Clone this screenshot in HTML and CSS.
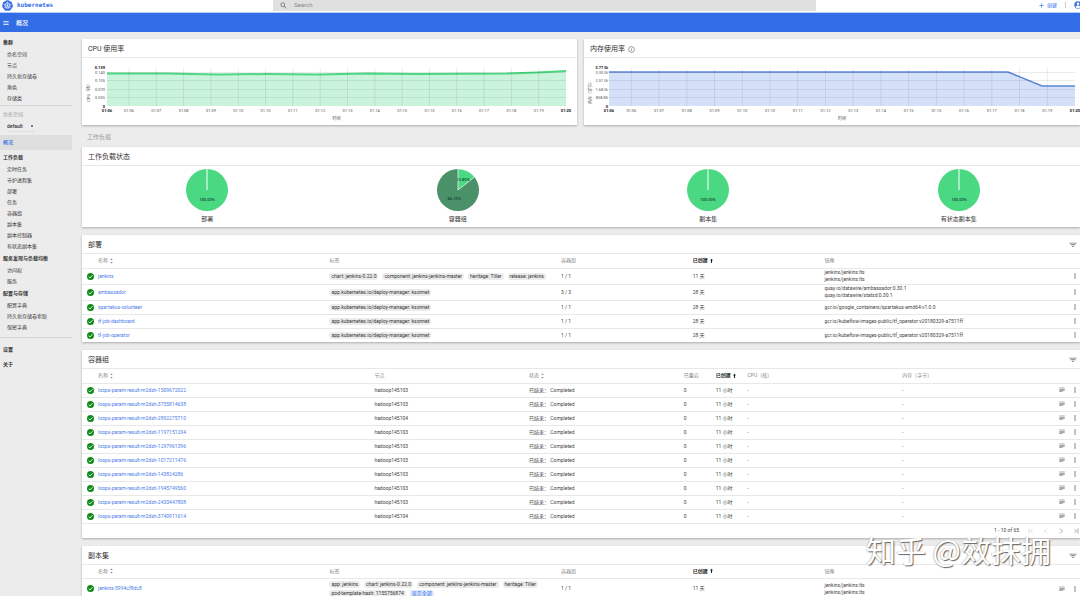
FILE: index.html
```html
<!DOCTYPE html>
<html lang="zh-CN">
<head>
<meta charset="utf-8">
<title>概况 - Kubernetes Dashboard</title>
<link rel="stylesheet" href="styles.css">
</head>
<body>
<svg class="sprite" aria-hidden="true">
  <symbol id="i-ok" viewBox="0 0 24 24"><circle cx="12" cy="12" r="12" fill="#128a1b"/><path d="M5.5 12.5l4.5 4.5 9-9.5" fill="none" stroke="#fff" stroke-width="3"/></symbol>
  <symbol id="i-more" viewBox="0 0 24 24"><circle cx="12" cy="4" r="2.6"/><circle cx="12" cy="12" r="2.6"/><circle cx="12" cy="20" r="2.6"/></symbol>
  <symbol id="i-filter" viewBox="0 0 24 24"><path d="M9 18h6v-2.5H9zM1 5v2.500h22V5zm4 7.500h14V10H5z"/></symbol>
  <symbol id="i-logs" viewBox="0 0 24 24"><path d="M1 3h22v2H1zM1 8h22v2H1zM1 13h22v2H1zM1 18h14v2H1z"/></symbol>
  <symbol id="i-sort" viewBox="0 0 12 24"><path d="M6 2l5 6H1zM6 22l5-6H1z"/></symbol>
  <symbol id="i-up" viewBox="0 0 12 24"><path d="M6 3l6 7H8v10H4V10H0z"/></symbol>
</svg>

<header class="topbar">
  <a class="brand" href="#">
    <svg class="logo" viewBox="0 0 32 32"><path d="M16 1l11.500 5.500L31 19l-8 11H9L1 19 4.500 6.500z" fill="#326de6" stroke="#326de6" stroke-width="2" stroke-linejoin="round"/><g fill="none" stroke="#fff" stroke-width="2"><circle cx="16" cy="16" r="7.500"/><path d="M16 4v10M16 18l-5 8M16 18l5 8M5 13l9 2M27 13l-9 2M7 22l7-5M25 22l-7-5" stroke-width="1.500"/></g><circle cx="16" cy="16" r="2" fill="#fff"/></svg>
    <span>kubernetes</span>
  </a>
  <label class="search">
    <svg viewBox="0 0 24 24"><circle cx="9.500" cy="9.500" r="6.500" fill="none" stroke="#666" stroke-width="2.500"/><path d="M14 14l8 8" stroke="#666" stroke-width="3"/></svg>
    <input type="text" placeholder="Search" aria-label="Search">
  </label>
  <div class="actions">
    <button class="create"><svg viewBox="0 0 12 12"><path d="M6 1v10M1 6h10" stroke="#326de6" stroke-width="1.500"/></svg>创建</button>
    <span class="divider"></span>
    <button class="user" aria-label="用户"><svg viewBox="0 0 24 24"><circle cx="12" cy="12" r="11" fill="#326de6"/><circle cx="12" cy="8.500" r="4" fill="#fff"/><path d="M4.500 18c1-6 14-6 15 0-4 5-11 5-15 0z" fill="#fff"/></svg></button>
  </div>
</header>

<div class="toolbar">
  <button aria-label="菜单"><svg viewBox="0 0 18 18"><path d="M1 3h16v2H1zM1 8h16v2H1zM1 13h16v2H1z" fill="#fff"/></svg></button>
  <h1>概况</h1>
</div>

<div class="layout">
  <nav class="sidebar">
    <a class="group" href="#">集群</a>
    <a class="item" href="#">命名空间</a>
    <a class="item" href="#">节点</a>
    <a class="item" href="#">持久化存储卷</a>
    <a class="item" href="#">角色</a>
    <a class="item" href="#">存储类</a>
    <div class="namespace">
      <label for="ns">命名空间</label>
      <select id="ns"><option>default</option></select>
    </div>
    <a class="active" href="#">概况</a>
    <a class="group" href="#">工作负载</a>
    <a class="item" href="#">定时任务</a>
    <a class="item" href="#">守护进程集</a>
    <a class="item" href="#">部署</a>
    <a class="item" href="#">任务</a>
    <a class="item" href="#">容器组</a>
    <a class="item" href="#">副本集</a>
    <a class="item" href="#">副本控制器</a>
    <a class="item" href="#">有状态副本集</a>
    <a class="group" href="#">服务发现与负载均衡</a>
    <a class="item" href="#">访问权</a>
    <a class="item" href="#">服务</a>
    <a class="group" href="#">配置与存储</a>
    <a class="item" href="#">配置字典</a>
    <a class="item" href="#">持久化存储卷索取</a>
    <a class="item" href="#">保密字典</a>
    <div class="footer-links">
      <a class="group" href="#">设置</a>
      <a class="group" href="#">关于</a>
    </div>
  </nav>

  <main class="content">
    <div class="charts">
      <section class="card">
        <h2>CPU 使用率</h2>
        <div class="chart">
          <span class="ylabel">CPU（核）</span>
          <svg class="plot cpu" data-end="01:20">
            <svg class="area" viewBox="0 0 459 38" preserveAspectRatio="none" width="100%" height="38" y="2">
              <path d="M0 5.500L60 5.500L110 6.500L160 6L210 6.500L260 5.500L310 6L400 5.500L430 4.500L459 3V38H0z" fill="#c9f3da"/>
              <path d="M0 5.500L60 5.500L110 6.500L160 6L210 6.500L260 5.500L310 6L400 5.500L430 4.500L459 3" fill="none" stroke="#4bd882" stroke-width="2" vector-effect="non-scaling-stroke"/>
            </svg>
            <g class="yticks"><text class="bold" x="-2" y="3">0.159</text><text x="-2" y="8">0.140</text><text x="-2" y="16">0.105</text><text x="-2" y="25">0.070</text><text x="-2" y="33">0.035</text><text class="bold" x="-2" y="42">0</text></g>
          </svg>
          <span class="xlabel">时间</span>
        </div>
      </section>
      <section class="card">
        <h2>内存使用率 <svg class="info" viewBox="0 0 24 24"><circle cx="12" cy="12" r="10" fill="none" stroke="#555" stroke-width="2"/><path d="M12 11v6M12 7v2" stroke="#555" stroke-width="2"/></svg></h2>
        <div class="chart memory">
          <span class="ylabel">内存（字节）</span>
          <svg class="plot mem" data-end="01:20">
            <svg class="area" viewBox="0 0 466 38" preserveAspectRatio="none" width="100%" height="38" y="2">
              <path d="M0 4H399L433 18H466V38H0z" fill="#d5e1f8"/>
              <path d="M0 4H399L433 18H466" fill="none" stroke="#5a86d6" stroke-width="1.500" vector-effect="non-scaling-stroke"/>
            </svg>
            <g class="yticks"><text class="bold" x="-1" y="3">3.77 Gi</text><text x="-1" y="8">3.35 Gi</text><text x="-1" y="16">2.51 Gi</text><text x="-1" y="25">1.68 Gi</text><text x="-1" y="33">858 Mi</text><text class="bold" x="-1" y="42">0</text></g>
          </svg>
          <span class="xlabel">时间</span>
        </div>
      </section>
    </div>

    <p class="section-label">工作负载</p>

    <section class="card status">
      <h2>工作负载状态</h2>
      <div class="pies">
        <figure><svg viewBox="0 0 42 42"><circle cx="21" cy="21" r="21" fill="#4bd882"/><path d="M21 0v21" stroke="#fff"/><text x="21" y="32">100.00%</text></svg><figcaption>部署</figcaption></figure>
        <figure><svg viewBox="0 0 42 42"><circle cx="21" cy="21" r="21" fill="#4a9068"/><path d="M21 21V0A21 21 0 0 1 37.500 8z" fill="#4bd882" stroke="#fff" stroke-width=".7"/><text x="26" y="12">13.85%</text><text x="17" y="31">86.15%</text></svg><figcaption>容器组</figcaption></figure>
        <figure><svg viewBox="0 0 42 42"><circle cx="21" cy="21" r="21" fill="#4bd882"/><path d="M21 0v21" stroke="#fff"/><text x="21" y="32">100.00%</text></svg><figcaption>副本集</figcaption></figure>
        <figure><svg viewBox="0 0 42 42"><circle cx="21" cy="21" r="21" fill="#4bd882"/><path d="M21 0v21" stroke="#fff"/><text x="21" y="32">100.00%</text></svg><figcaption>有状态副本集</figcaption></figure>
      </div>
    </section>

    <section class="card">
      <h2>部署<button class="filter" aria-label="筛选"><svg><use href="#i-filter"/></svg></button></h2>
      <table class="deployments">
        <colgroup><col class="c-icon"><col class="c-name"><col class="c-labels"><col class="c-pods"><col class="c-age"><col><col class="c-act"><col class="c-act"></colgroup>
        <thead><tr><th></th><th>名称 <svg class="sort"><use href="#i-sort"/></svg></th><th>标签</th><th>容器组</th><th class="sorted">已创建 <svg class="sort"><use href="#i-up"/></svg></th><th>镜像</th><th></th><th></th></tr></thead>
        <tbody>
          <tr class="tall"><td><svg class="ok"><use href="#i-ok"/></svg></td><td><a href="#">jenkins</a></td><td><div class="chips"><span>chart: jenkins-0.22.0</span><span>component: jenkins-jenkins-master</span><span>heritage: Tiller</span><span>release: jenkins</span></div></td><td>1 / 1</td><td>11 天</td><td>jenkins/jenkins:lts<br>jenkins/jenkins:lts</td><td></td><td><button aria-label="更多"><svg><use href="#i-more"/></svg></button></td></tr>
          <tr class="tall"><td><svg class="ok"><use href="#i-ok"/></svg></td><td><a href="#">ambassador</a></td><td><div class="chips"><span>app.kubernetes.io/deploy-manager: ksonnet</span></div></td><td>3 / 3</td><td>28 天</td><td>quay.io/datawire/ambassador:0.30.1<br>quay.io/datawire/statsd:0.30.1</td><td></td><td><button aria-label="更多"><svg><use href="#i-more"/></svg></button></td></tr>
          <tr><td><svg class="ok"><use href="#i-ok"/></svg></td><td><a href="#">spartakus-volunteer</a></td><td><div class="chips"><span>app.kubernetes.io/deploy-manager: ksonnet</span></div></td><td>1 / 1</td><td>28 天</td><td>gcr.io/google_containers/spartakus-amd64:v1.0.0</td><td></td><td><button aria-label="更多"><svg><use href="#i-more"/></svg></button></td></tr>
          <tr><td><svg class="ok"><use href="#i-ok"/></svg></td><td><a href="#">tf-job-dashboard</a></td><td><div class="chips"><span>app.kubernetes.io/deploy-manager: ksonnet</span></div></td><td>1 / 1</td><td>28 天</td><td>gcr.io/kubeflow-images-public/tf_operator:v20180329-a7511ff</td><td></td><td><button aria-label="更多"><svg><use href="#i-more"/></svg></button></td></tr>
          <tr><td><svg class="ok"><use href="#i-ok"/></svg></td><td><a href="#">tf-job-operator</a></td><td><div class="chips"><span>app.kubernetes.io/deploy-manager: ksonnet</span></div></td><td>1 / 1</td><td>28 天</td><td>gcr.io/kubeflow-images-public/tf_operator:v20180329-a7511ff</td><td></td><td><button aria-label="更多"><svg><use href="#i-more"/></svg></button></td></tr>
        </tbody>
      </table>
    </section>

    <section class="card">
      <h2>容器组<button class="filter" aria-label="筛选"><svg><use href="#i-filter"/></svg></button></h2>
      <table class="pods">
        <colgroup><col class="c-icon"><col class="p-name"><col class="p-node"><col class="p-node"><col class="p-small"><col class="p-small"><col class="p-node"><col><col class="c-act"><col class="c-act"></colgroup>
        <thead><tr><th></th><th>名称 <svg class="sort"><use href="#i-sort"/></svg></th><th>节点</th><th>状态 <svg class="sort"><use href="#i-sort"/></svg></th><th>已重启</th><th class="sorted">已创建 <svg class="sort"><use href="#i-up"/></svg></th><th>CPU（核）</th><th>内存（字节）</th><th></th><th></th></tr></thead>
        <tbody id="pod-rows"></tbody>
      </table>
      <div class="pager"><span>1 - 10 of 65</span>
        <button aria-label="首页"><svg viewBox="0 0 12 12"><path d="M2 1v10M9 2L5 6l4 4"/></svg></button>
        <button aria-label="上一页"><svg viewBox="0 0 12 12"><path d="M8 1L3 6l5 5"/></svg></button>
        <button class="on" aria-label="下一页"><svg viewBox="0 0 12 12"><path d="M4 1l5 5-5 5"/></svg></button>
        <button class="on" aria-label="末页"><svg viewBox="0 0 12 12"><path d="M10 1v10M3 2l4 4-4 4"/></svg></button>
      </div>
    </section>

    <section class="card">
      <h2>副本集<button class="filter" aria-label="筛选"><svg><use href="#i-filter"/></svg></button></h2>
      <table class="deployments replicas">
        <colgroup><col class="c-icon"><col class="c-name"><col class="c-labels"><col class="c-pods"><col class="c-age"><col><col class="c-act"><col class="c-act"></colgroup>
        <thead><tr><th></th><th>名称 <svg class="sort"><use href="#i-sort"/></svg></th><th>标签</th><th>容器组</th><th class="sorted">已创建 <svg class="sort"><use href="#i-up"/></svg></th><th>镜像</th><th></th><th></th></tr></thead>
        <tbody>
          <tr class="tall"><td><svg class="ok"><use href="#i-ok"/></svg></td><td><a href="#">jenkins-5994cf8dc8</a></td><td><div class="chips"><span>app: jenkins</span><span>chart: jenkins-0.22.0</span><span>component: jenkins-jenkins-master</span><span>heritage: Tiller</span><span>pod-template-hash: 1155756874</span><a class="all" href="#">显示全部</a></div></td><td>1 / 1</td><td>11 天</td><td>jenkins/jenkins:lts<br>jenkins/jenkins:lts</td><td><button aria-label="日志"><svg><use href="#i-logs"/></svg></button></td><td><button aria-label="更多"><svg><use href="#i-more"/></svg></button></td></tr>
        </tbody>
      </table>
    </section>
  </main>
</div>
<div class="watermark">知乎 @效抹拥</div>
<script src="app.js"></script>
</body>
</html>
```

FILE: styles.css
```css
* { box-sizing: border-box; }
html, body { height: 100%; }
body {
  margin: 0;
  overflow: hidden;
  background: #ececec;
  color: #444;
  font: 5px/7px Roboto, "Noto Sans CJK SC", sans-serif;
}
a { color: inherit; text-decoration: none; }
button { display: inline-flex; align-items: center; padding: 0; border: 0; background: none; color: inherit; font: inherit; }
h1, h2, p, figure { margin: 0; font-weight: 400; }
.sprite { display: none; }

.topbar { display: flex; align-items: center; height: 13px; padding-bottom: 2px; background: #fff; border-bottom: 1px solid #b7cbf5; }
.brand { display: flex; flex: 0 0 273px; align-items: center; gap: 4px; padding-left: 2px; color: #326de6; font: 700 6px/10px "DejaVu Sans Mono", monospace; }
.logo { width: 11px; height: 11px; }
.search { display: flex; flex: 0 1 543px; align-items: center; gap: 7px; height: 11px; padding-left: 7px; background: #e0e0e0; }
.search svg { width: 7px; height: 7px; }
.search input { flex: 1; min-width: 0; padding: 0; border: 0; outline: 0; background: none; font: 6px/8px Roboto, sans-serif; }
.search input::placeholder { color: #888; opacity: 1; }
.actions { display: flex; align-items: center; gap: 8px; margin-left: auto; color: #326de6; }
.create { gap: 3px; }
.create svg { width: 5px; height: 5px; }
.divider { width: 1px; height: 6px; background: #ccc; }
.user { width: 6px; overflow: hidden; }
.user svg { flex: none; width: 8px; height: 8px; }

.toolbar { display: flex; align-items: center; gap: 7px; height: 19px; padding-left: 3px; background: #326de6; color: #fff; }
.toolbar svg { width: 6px; height: 6px; }
.toolbar h1 { font-size: 6px; font-weight: 500; line-height: 8px; }

.layout { display: flex; }
.sidebar { flex: 0 0 72px; padding-top: 4px; color: #333; }
.sidebar a { display: block; white-space: nowrap; }
.group { height: 13px; padding-left: 3px; font-weight: 700; line-height: 12px; }
.item { height: 11px; padding-left: 7px; line-height: 11px; }
.namespace { display: flex; flex-direction: column; align-items: flex-start; height: 30px; margin-top: 1px; padding: 5px 3px 0; border-top: 1px solid #d8d8d8; color: #999; }
.namespace select { width: 27px; height: 11px; margin: 3px 0 0 4px; padding: 0; border: 0; border-bottom: 1px solid #ddd; appearance: none; border-radius: 0; background: linear-gradient(#777, #777) no-repeat right 1px center / 2px 2px; color: #333; font: 500 5px/10px Roboto, sans-serif; }
.sidebar .active { height: 15px; margin-bottom: 1px; padding-left: 3px; background: #dedede; color: #326de6; font-weight: 500; line-height: 15px; }
.footer-links { margin-top: 4px; padding-top: 5px; border-top: 1px solid #d8d8d8; }
.footer-links .group { height: 15px; }

.content { flex: 1; min-width: 0; padding: 7px 0 0 10px; }
.card { margin-bottom: 8px; background: #fff; box-shadow: 0 1px 2px #aaa; }
.card h2 { display: flex; align-items: center; justify-content: space-between; height: 19px; padding: 2px 3px 0 6px; border-bottom: 1px solid #e8e8e8; color: #333; font-size: 7px; line-height: 10px; }
.filter svg { width: 8px; height: 8px; fill: #777; }
.charts { display: grid; grid-template-columns: 495fr 496fr; gap: 7px; }
.charts .card { margin: 0; }
.charts h2 { justify-content: flex-start; gap: 3px; }
.info { width: 7px; height: 7px; }
.chart { display: grid; grid-template-columns: 25px 1fr; height: 67px; padding: 8px 11px 0 0; }
.chart.memory { padding-right: 5px; }
.ylabel { align-self: center; justify-self: start; margin-left: 4px; font-size: 4px; line-height: 6px; writing-mode: vertical-rl; text-orientation: sideways; transform: rotate(180deg); white-space: nowrap; }
.xlabel { grid-column: 2; justify-self: center; margin-top: -2px; font-size: 4px; line-height: 6px; }
.plot { display: block; width: 100%; height: 48px; overflow: visible; }
.plot text { fill: #555; font-size: 4px; }
.plot text.bold { fill: #111; font-weight: 700; }
.plot .grid { stroke: #000; stroke-opacity: .08; }
.yticks text { text-anchor: end; }
.xticks text { text-anchor: middle; }
.section-label { padding: 7px 0 6px 5px; color: #999; font-size: 6px; line-height: 9px; }

.pies { display: grid; grid-template-columns: repeat(4, 25.1%); padding: 3px 0 4px; }
.pies figure { display: flex; flex-direction: column; align-items: center; gap: 4px; }
.pies svg { width: 42px; height: 42px; }
.pies text { fill: #143; font-size: 4px; font-weight: 500; text-anchor: middle; }
.pies figcaption { color: #333; font-size: 6px; line-height: 8px; }

table { width: 100%; border-collapse: collapse; table-layout: fixed; }
th, td { height: 14px; padding: 0; border-bottom: 1px solid #e8e8e8; text-align: left; font-weight: 400; white-space: nowrap; }
th { color: #888; }
th.sorted { color: #222; font-weight: 700; }
tbody tr:last-child td { border-bottom: 0; }
.pods tbody tr:last-child td { border-bottom: 1px solid #e8e8e8; }
td a { color: #4a7de8; }
td:first-child { padding-left: 5px; }
.tall td { height: 16px; }
.replicas .tall td { height: 20px; }
td svg { display: block; width: 6px; height: 6px; fill: #555; }
td button { margin-left: 5px; vertical-align: middle; }
td .ok { width: 7px; height: 7px; }
.sort { width: 3px; height: 6px; margin-left: 1px; fill: currentColor; vertical-align: middle; }
.c-icon { width: 1.6%; }
.c-name { width: 23.2%; }
.c-labels { width: 23.2%; }
.c-pods, .c-age { width: 13.2%; }
.c-act { width: 13px; }
.p-name { width: 27.7%; }
.p-node { width: 15.5%; }
.p-small { width: 3.2%; }
.chips { display: flex; flex-wrap: wrap; gap: 2px 4px; }
.chips span, .chips .all { padding: 0 2px; border-radius: 3px; background: #ececec; color: #333; }
.chips .all { background: #dce7fc; color: #326de6; }
.pager { display: flex; align-items: center; justify-content: flex-end; gap: 9px; height: 14px; padding-right: 1px; }
.pager svg { width: 6px; height: 6px; fill: none; stroke: #bbb; stroke-width: 1px; }
.pager .on svg { stroke: #555; }

.watermark { position: absolute; right: 29px; bottom: 29px; color: #fff; font: 30px/36px "Noto Sans CJK SC", sans-serif; text-shadow: 1px 1px 1px #666, -1px 0 1px #ccc; white-space: nowrap; }
```

FILE: app.js
```js
const pods = [
  ["1509672022", "hadoop145103"], ["3755814638", "hadoop145103"],
  ["2892275710", "hadoop145104"], ["1197151294", "hadoop145103"],
  ["1297961396", "hadoop145103"], ["1017211476", "hadoop145103"],
  ["143824286", "hadoop145103"], ["1945749560", "hadoop145103"],
  ["2433447808", "hadoop145103"], ["3740911614", "hadoop145104"]
];
document.getElementById("pod-rows").innerHTML = pods.map(([id, node]) => `
  <tr><td><svg class="ok"><use href="#i-ok"/></svg></td>
  <td><a href="#">loops-param-result-m2dsh-${id}</a></td><td>${node}</td>
  <td>已结束： Completed</td><td>0</td><td>11 小时</td><td>-</td><td>-</td>
  <td><button aria-label="日志"><svg><use href="#i-logs"/></svg></button></td>
  <td><button aria-label="更多"><svg><use href="#i-more"/></svg></button></td></tr>`).join("");

const times = ["06", "07", "08", "09", "10", "10", "11", "12", "13", "14", "15", "15", "16", "17", "18", "19"];
document.querySelectorAll(".plot").forEach(plot => {
  let lines = "", labels = '<text class="bold" x="0" y="46">01:06</text>';
  times.forEach((t, i) => {
    const x = (4.8 + i * 5.95).toFixed(2) + "%";
    lines += `<line class="grid" x1="${x}" x2="${x}" y1="2" y2="40"/>`;
    labels += `<text x="${x}" y="46">01:${t}</text>`;
  });
  labels += `<text class="bold" x="100%" y="46">${plot.dataset.end}</text>`;
  [6, 14, 23, 31].forEach(y => { lines += `<line class="grid" x1="0" x2="100%" y1="${y}.5" y2="${y}.5"/>`; });
  plot.insertAdjacentHTML("beforeend", `<g>${lines}</g><g class="xticks">${labels}</g>`);
});
```
